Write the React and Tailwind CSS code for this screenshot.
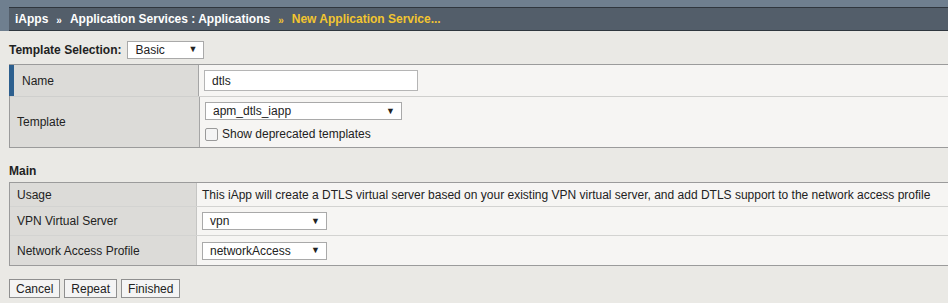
import React from "react";

const Select = ({ value, className }) => (
  <div
    className={`flex items-center justify-between bg-white border border-[#a9a9a9] h-[18px] pl-[7px] pr-[6px] text-[12px] text-[#222] ${className}`}
  >
    <span>{value}</span>
    <span className="text-[9px] leading-none text-[#222]">▼</span>
  </div>
);

const Button = ({ children }) => (
  <button className="h-[19px] px-[6px] border border-[#8f8f8f] bg-[#f4f4f4] text-[12px] text-[#222] leading-none">
    {children}
  </button>
);

export default function App() {
  return (
    <div
      className="w-[948px] h-[303px] bg-[#eae9e5] text-[12px] text-[#222] overflow-hidden"
      style={{ fontFamily: '"Liberation Sans", Arial, sans-serif' }}
    >
      {/* Header */}
      <div className="bg-[#6f7f8f] pt-[7px] pl-[9px]">
        <div className="h-[24px] border-y border-[#2f363e] bg-[#535e6a] flex items-center pl-[6px] font-bold text-white text-[12px]">
          <span>iApps</span>
          <span className="mx-[8px] text-[10px] pt-[2px]">»</span>
          <span>Application Services : Applications</span>
          <span className="mx-[8px] text-[10px] pt-[2px] text-[#f2c530]">»</span>
          <span className="text-[#f2c530]">New Application Service...</span>
        </div>
      </div>

      <div className="pl-[9px]">
        {/* Template selection */}
        <div className="flex items-center h-[17px] mt-[10px]">
          <span className="font-bold mr-[6px]">Template Selection:</span>
          <Select value="Basic" className="w-[77px] h-[17px] pl-[5px]" />
        </div>

        {/* Template table */}
        <div className="mt-[6px] border-y border-l border-[#9b9b9b]">
          <div className="flex h-[32px] border-b border-[#cfcfcd]">
            <div className="w-[190px] bg-[#dcdbd8] border-l-[5px] border-[#2d5f8e] -ml-px flex items-center pl-[8px] border-r border-r-[#a5a5a5]">
              Name
            </div>
            <div className="flex-1 bg-[#f6f5f3] flex items-center pl-[5px]">
              <div className="w-[214px] h-[21px] bg-white border border-[#b5b5b5] flex items-center pl-[7px]">
                dtls
              </div>
            </div>
          </div>
          <div className="flex h-[50px]">
            <div className="w-[190px] bg-[#dcdbd8] flex items-center pl-[7px] border-r border-[#a5a5a5]">
              Template
            </div>
            <div className="flex-1 bg-[#f6f5f3] pl-[5px] pt-[5px]">
              <Select value="apm_dtls_iapp" className="w-[197px]" />
              <div className="flex items-center mt-[5px]">
                <div className="w-[13px] h-[13px] border border-[#9a9a9a] bg-[#f4f4f4] rounded-[2px] mr-[4px]" />
                <span>Show deprecated templates</span>
              </div>
            </div>
          </div>
        </div>

        {/* Main */}
        <div className="font-bold mt-[16px] h-[14px] leading-[14px]">Main</div>
        <div className="mt-[4px] border-y border-l border-[#9b9b9b]">
          <div className="flex h-[24px] border-b border-[#d3d3d1]">
            <div className="w-[187px] bg-[#dcdbd8] flex items-center pl-[7px] border-r border-[#c5c5c3]">
              Usage
            </div>
            <div className="flex-1 bg-[#f6f5f3] flex items-center pl-[5px]">
              This iApp will create a DTLS virtual server based on your existing VPN virtual server, and add DTLS support to the network access profile
            </div>
          </div>
          <div className="flex h-[29px] border-b border-[#d3d3d1]">
            <div className="w-[187px] bg-[#dcdbd8] flex items-center pl-[7px] border-r border-[#c5c5c3]">
              VPN Virtual Server
            </div>
            <div className="flex-1 bg-[#f6f5f3] flex items-center pl-[5px]">
              <Select value="vpn" className="w-[125px]" />
            </div>
          </div>
          <div className="flex h-[29px]">
            <div className="w-[187px] bg-[#dcdbd8] flex items-center pl-[7px] border-r border-[#c5c5c3]">
              Network Access Profile
            </div>
            <div className="flex-1 bg-[#f6f5f3] flex items-center pl-[5px]">
              <Select value="networkAccess" className="w-[125px]" />
            </div>
          </div>
        </div>

        {/* Buttons */}
        <div className="flex gap-[4px] mt-[13px]">
          <Button>Cancel</Button>
          <Button>Repeat</Button>
          <Button>Finished</Button>
        </div>
      </div>
    </div>
  );
}
